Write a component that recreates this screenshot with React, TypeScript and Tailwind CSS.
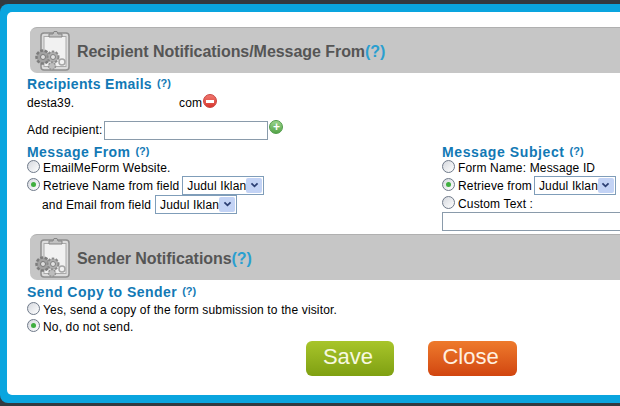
const ClipboardGears = () => (
  <svg viewBox="0 0 38 44" className="w-[38px] h-[44px] shrink-0">
    <rect x="8" y="4" width="28" height="37" rx="3" fill="#dcdcdc" stroke="#8f8f8f" strokeWidth="1.500" />
    <rect x="11" y="7.500" width="22" height="30" fill="#f1f1f1" stroke="#aaaaaa" />
    <path d="M16 5 h4 l1-2.500 h3 l1 2.500 h4 v3 h-13 z" fill="#c2c2c2" stroke="#858585" />
    <circle cx="10" cy="28" r="6.500" fill="#a2a2a2" stroke="#7c7c7c" strokeWidth="2.500" strokeDasharray="3 1.500" />
    <circle cx="10" cy="28" r="2.500" fill="#dddddd" stroke="#777" />
    <circle cx="20" cy="28" r="5.500" fill="#b0b0b0" stroke="#8a8a8a" strokeWidth="2" strokeDasharray="2.500 1.500" />
    <circle cx="20" cy="28" r="2.500" fill="#e2e2e2" stroke="#808080" />
    <circle cx="19" cy="37" r="3.500" fill="#bdbdbd" stroke="#929292" strokeWidth="1.500" strokeDasharray="2 1" />
    <circle cx="29" cy="33" r="3" fill="none" stroke="#a6a6a6" strokeWidth="1.500" />
  </svg>
);

const SectionBar = ({ title }: { title: string }) => (
  <div className="ml-[23px] h-[46px] bg-[#c6c6c6] rounded-l-[7px] border-t border-[#b0b0b0] flex items-center pl-[3px] shrink-0">
    <ClipboardGears />
    <span className="ml-[6px] pt-[2px] text-[16px] leading-none font-bold text-[#555] tracking-[-0.05px]">
      {title}
      <span className="text-[#2a9fd0]">(?)</span>
    </span>
  </div>
);

const Heading = ({ children, className }: { children: string; className?: string }) => (
  <div className={`h-[17px] flex items-center text-[14px] font-bold text-[#1279b5] whitespace-nowrap leading-none ${className ?? "tracking-[0.45px]"}`}>
    {children}
    <span className="ml-[5px] text-[11px] text-[#1279b5] tracking-normal">(?)</span>
  </div>
);

const Radio = ({ checked }: { checked?: boolean }) => (
  <span className="w-[13px] h-[13px] rounded-full border border-[#6f7a8a] bg-gradient-to-br from-[#d5d8de] to-white flex items-center justify-center shrink-0 mr-[3px] -mt-[3px]">
    {checked && <span className="w-[5px] h-[5px] rounded-full bg-[#3fae3f]" />}
  </span>
);

const Select = ({ className }: { className?: string }) => (
  <span className={`w-[82px] h-[19px] border border-[#7f9db9] bg-white flex items-center justify-between pl-[4px] pr-[1px] text-[12px] tracking-[0.15px] text-black shrink-0 ${className ?? ""}`}>
    Judul Iklan
    <span className="w-[16px] h-[15px] bg-[#c3d3f5] rounded-[2px] flex items-center justify-center">
      <svg viewBox="0 0 10 8" className="w-[9px] h-[7px]">
        <path d="M1.500 1.500 L5 5 L8.500 1.500" fill="none" stroke="#2c3f73" strokeWidth="2" />
      </svg>
    </span>
  </span>
);

const Row = ({ className, children }: { className?: string; children: React.ReactNode }) => (
  <div className={`flex items-center whitespace-nowrap text-[12px] tracking-[0.15px] text-black leading-none ${className ?? ""}`}>
    {children}
  </div>
);

export default function App() {
  return (
    <div className="w-[620px] h-[406px] overflow-hidden bg-[#333a40] pt-[4px] font-['Liberation_Sans',Arial,sans-serif]">
      <div className="h-[399px] bg-[#0aa5df] rounded-l-[8px] pl-[7px] py-[8px]">
        <div className="h-[383px] bg-white rounded-l-[5px] pt-[15px] flex flex-col">
          <SectionBar title="Recipient Notifications/Message From" />

          <div className="pl-[20px] pt-[2px]">
            <Heading className="tracking-[0.3px]">Recipients Emails</Heading>
            <Row className="h-[16px] mt-[3px]">
              <span className="w-[152px]">desta39.</span>
              <span>com</span>
              <span className="ml-[1px] w-[14px] h-[14px] rounded-full bg-gradient-to-b from-[#f0766e] to-[#d8352e] border border-[#c9433e] flex items-center justify-center -mt-[4px]">
                <span className="w-[8px] h-[3px] bg-white" />
              </span>
            </Row>
            <Row className="mt-[9px] h-[20px]">
              <span className="mr-[2px]">Add recipient:</span>
              <span className="w-[164px] h-[19px] border border-[#8a9bab] bg-white" />
              <span className="ml-[1px] w-[14px] h-[14px] rounded-full bg-gradient-to-b from-[#9ad48c] to-[#55a548] border border-[#4e9a47] flex items-center justify-center text-white text-[12px] font-bold leading-none -mt-[6px]">
                +
              </span>
            </Row>
          </div>

          <div className="flex pl-[20px] mt-[3px] h-[91px]">
            <div className="w-[415px] shrink-0">
              <Heading>Message From</Heading>
              <Row className="h-[16px]">
                <Radio />
                EmailMeForm Website.
              </Row>
              <Row className="h-[19px]">
                <Radio checked />
                Retrieve Name from field
                <Select className="ml-[3px]" />
              </Row>
              <Row className="h-[19px] pl-[15px]">
                and Email from field
                <Select className="ml-[4px]" />
              </Row>
            </div>
            <div className="w-[240px] shrink-0">
              <Heading className="tracking-[0.6px]">Message Subject</Heading>
              <Row className="h-[16px]">
                <Radio />
                Form Name: Message ID
              </Row>
              <Row className="h-[19px]">
                <Radio checked />
                Retrieve from
                <Select className="ml-[2px]" />
              </Row>
              <Row className="h-[17px]">
                <Radio />
                Custom Text :
              </Row>
              <div className="h-[19px] w-[240px] border border-[#8a9bab] bg-white" />
            </div>
          </div>

          <SectionBar title="Sender Notifications" />

          <div className="pl-[20px] pt-[3px]">
            <Heading>Send Copy to Sender</Heading>
            <Row className="h-[17px] mt-[1px]">
              <Radio />
              Yes, send a copy of the form submission to the visitor.
            </Row>
            <Row className="h-[17px]">
              <Radio checked />
              No, do not send.
            </Row>
          </div>

          <div className="flex pl-[299px] gap-[34px] mt-[6px]">
            <button className="w-[88px] h-[35px] rounded-[6px] bg-gradient-to-b from-[#a8c52a] to-[#7fa011] text-[#f7f9e0] text-[22px] leading-none pb-[3px] pr-[4px]">
              Save
            </button>
            <button className="w-[89px] h-[35px] rounded-[6px] bg-gradient-to-b from-[#ee7a2c] to-[#d1450f] text-[#fff0e0] text-[22px] leading-none pb-[3px] pr-[4px]">
              Close
            </button>
          </div>
        </div>
      </div>
    </div>
  );
}
